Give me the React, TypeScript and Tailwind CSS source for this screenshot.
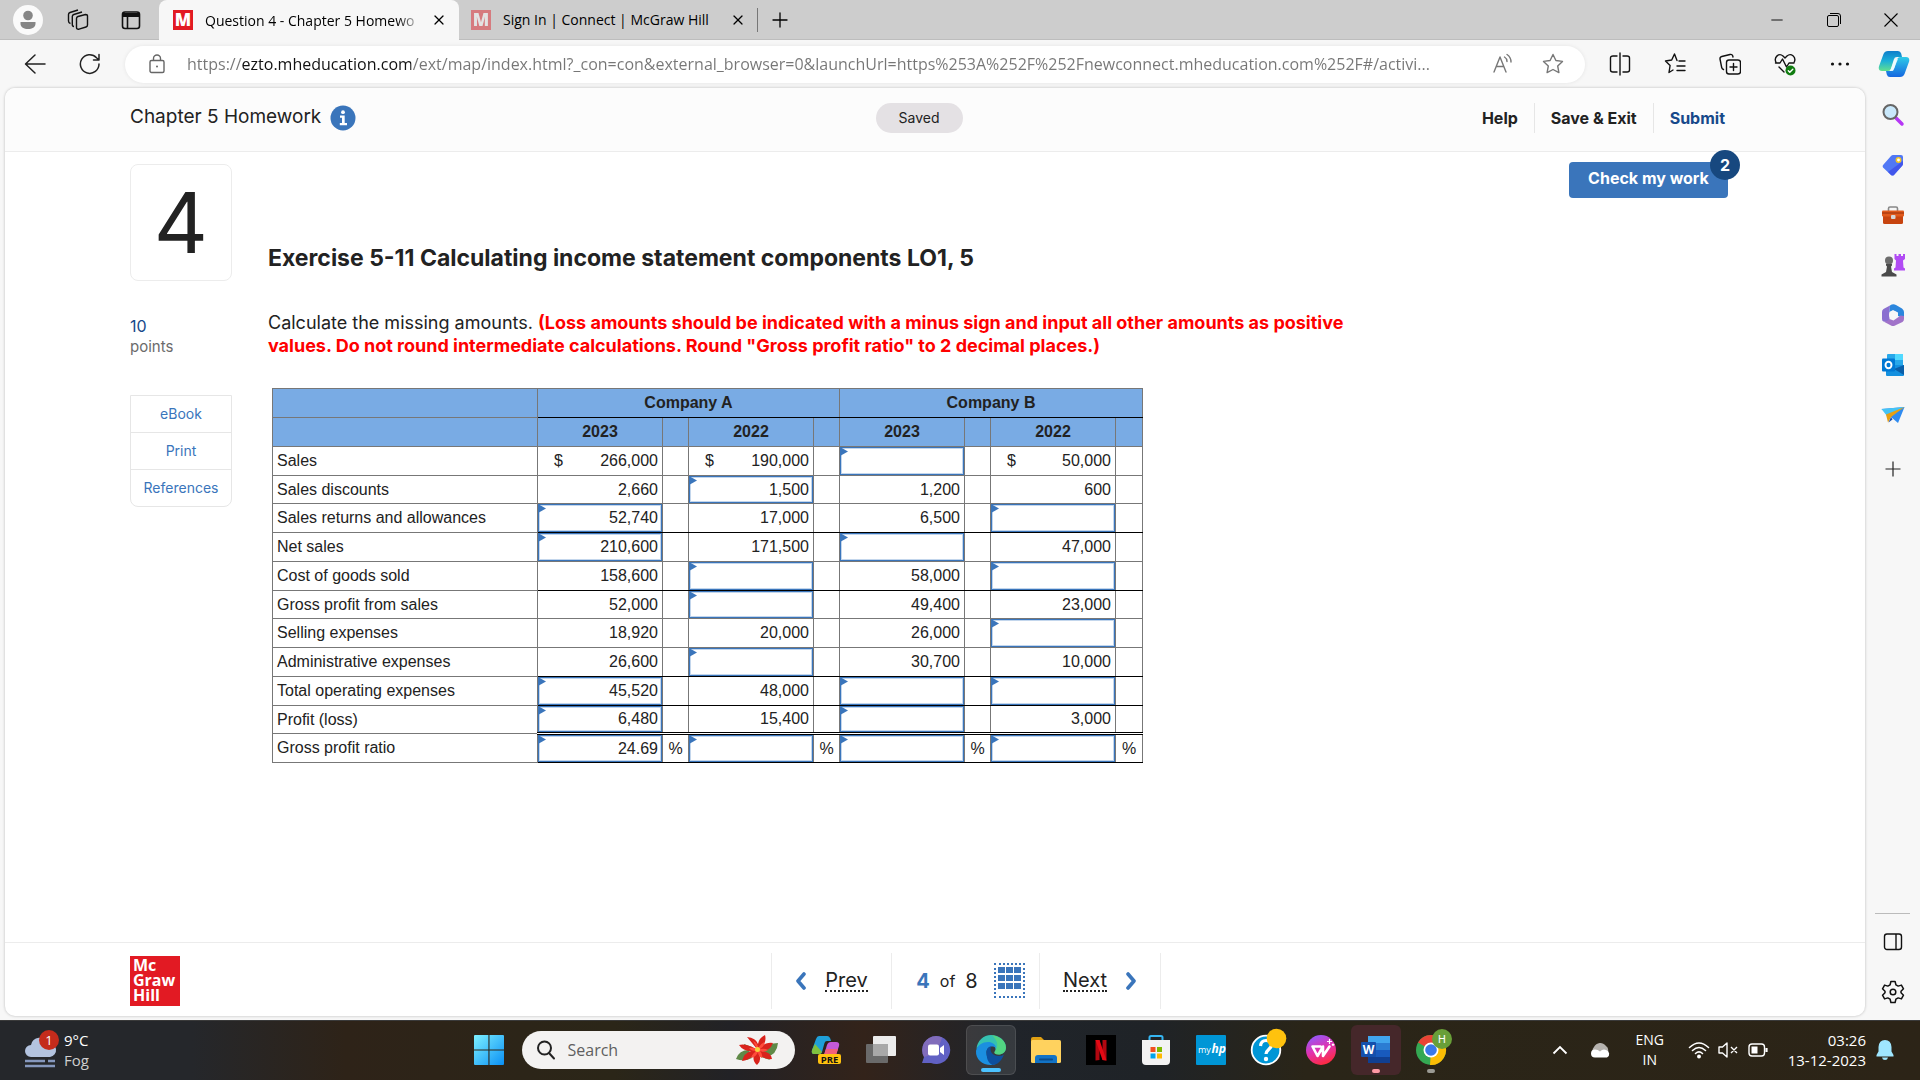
import type { ReactNode } from 'react';
import { X, Plus, Minus } from 'lucide-react';

type Cell = { value: string; input?: boolean; dollar?: boolean };
type Row = { label: string; rule?: 'single' | 'double'; cells: Cell[]; unit?: string };

const n = (value: string): Cell => ({ value });
const d = (value: string): Cell => ({ value, dollar: true });
const i = (value = ''): Cell => ({ value, input: true });

const COLUMNS = ['Company A 2023', 'Company A 2022', 'Company B 2023', 'Company B 2022'];

const ROWS: Row[] = [
    { label: 'Sales', cells: [d('266,000'), d('190,000'), i(), d('50,000')] },
    { label: 'Sales discounts', cells: [n('2,660'), i('1,500'), n('1,200'), n('600')] },
    { label: 'Sales returns and allowances', rule: 'single', cells: [i('52,740'), n('17,000'), n('6,500'), i()] },
    { label: 'Net sales', cells: [i('210,600'), n('171,500'), i(), n('47,000')] },
    { label: 'Cost of goods sold', rule: 'single', cells: [n('158,600'), i(), n('58,000'), i()] },
    { label: 'Gross profit from sales', cells: [n('52,000'), i(), n('49,400'), n('23,000')] },
    { label: 'Selling expenses', cells: [n('18,920'), n('20,000'), n('26,000'), i()] },
    { label: 'Administrative expenses', rule: 'single', cells: [n('26,600'), i(), n('30,700'), n('10,000')] },
    { label: 'Total operating expenses', rule: 'single', cells: [i('45,520'), n('48,000'), i(), i()] },
    { label: 'Profit (loss)', rule: 'double', cells: [i('6,480'), n('15,400'), i(), n('3,000')] },
    { label: 'Gross profit ratio', rule: 'single', unit: '%', cells: [i('24.69'), i(), i(), i()] },
];

const RULES = {
    none: 'border-b-[#777777]',
    single: 'border-b-black',
    double: 'border-b-[3px] border-b-black [border-bottom-style:double]',
};

/* ---------- Browser chrome ---------- */

function Favicon({ faded }: { faded?: boolean }) {
    return (
        <svg viewBox="0 0 20 20" className={faded ? 'w-5 h-5 shrink-0 opacity-45' : 'w-5 h-5 shrink-0'}>
            <rect width="20" height="20" fill="#e21a23" />
            <text x="10" y="16" textAnchor="middle" fontSize="17" fontWeight="800" fontFamily="Open Sans, sans-serif" fill="#fff">M</text>
        </svg>
    );
}

function TabBar() {
    return (
        <header className="h-10 bg-[#cdcdcd] flex items-stretch text-black font-['Open_Sans',sans-serif]">
            <div className="w-[159px] flex items-center border-b border-[#bdbdbd]">
                <button aria-label="Profile" className="ml-[13px] w-[30px] h-[30px] rounded-full bg-[#fafafa] flex items-center justify-center">
                    <svg viewBox="0 0 18 20" className="w-[18px] h-5" fill="#868686">
                        <circle cx="9" cy="5.500" r="4.800" />
                        <path d="M1.500 12h15v1.500c0 4-3.500 5.500-7.500 5.500s-7.500-1.500-7.500-5.500z" />
                    </svg>
                </button>
                <button aria-label="Workspaces" className="ml-6">
                    <svg viewBox="0 0 22 22" className="w-[22px] h-[22px]" fill="none" stroke="#111" strokeWidth="1.400" strokeLinejoin="round">
                        <path d="M9.500 9.500q0-1.500 1.500-2l7.500-2q2 0 2 1.500v9q0 1.500-1.500 2l-7 2.200q-2.500.3-2.500-1.700z" />
                        <path d="M7 17.500q-1.700 0-1.700-2v-8q0-1.500 1.500-2L15 3" />
                        <path d="M3.500 14.500q-2-.5-2-2.500V5.500q0-1.500 1.500-2L11 1" />
                    </svg>
                </button>
                <button aria-label="Tab actions" className="ml-8">
                    <svg viewBox="0 0 20 20" className="w-5 h-5" fill="none" stroke="#111" strokeWidth="1.600">
                        <rect x="1.500" y="2" width="17" height="16.500" rx="2.500" />
                        <path d="M2 5h16" strokeWidth="4" />
                        <path d="M6.500 6v12" />
                    </svg>
                </button>
            </div>
            <div className="w-[300px] bg-[#f7f7f7] rounded-t-lg flex items-center pl-[14px] pr-3">
                <Favicon />
                <button className="ml-3 w-[218px] overflow-hidden whitespace-nowrap text-left text-[14px] [mask-image:linear-gradient(to_right,black_88%,transparent)]">
                    Question 4 - Chapter 5 Homewo
                </button>
                <button aria-label="Close tab" className="ml-2">
                    <X size={16} strokeWidth={1.800} />
                </button>
            </div>
            <div className="flex-1 flex items-center border-b border-[#bdbdbd]">
                <div className="flex items-center pl-3">
                    <Favicon faded />
                    <button className="ml-3 w-[216px] whitespace-nowrap text-left text-[14px]">Sign In | Connect | McGraw Hill</button>
                    <button aria-label="Close tab" className="ml-[11px]">
                        <X size={16} strokeWidth={1.800} />
                    </button>
                </div>
                <div className="ml-[11px] h-6 w-px bg-[#777]" />
                <button aria-label="New tab" className="ml-2.5">
                    <Plus size={24} strokeWidth={1.300} />
                </button>
                <div className="ml-auto flex items-center">
                    <button aria-label="Minimize" className="w-[57px] flex justify-center">
                        <Minus size={18} strokeWidth={1.200} />
                    </button>
                    <button aria-label="Restore" className="w-[57px] flex justify-center">
                        <svg viewBox="0 0 14 14" className="w-[14px] h-[14px]" fill="none" stroke="#000" strokeWidth="1">
                            <rect x=".5" y="2.500" width="11" height="11" rx="1.500" />
                            <path d="M3 .5h8q2.500 0 2.500 2.500v8" />
                        </svg>
                    </button>
                    <button aria-label="Close window" className="w-[58px] flex justify-center">
                        <svg viewBox="0 0 14 14" className="w-[14px] h-[14px]" stroke="#000" strokeWidth="1.100">
                            <path d="M.5.5l13 13M13.500.5l-13 13" />
                        </svg>
                    </button>
                </div>
            </div>
        </header>
    );
}

function ToolButton({ label, children }: { label: string; children: ReactNode }) {
    return (
        <button aria-label={label} className="w-[55px] flex justify-center">
            <svg viewBox="0 0 22 24" className="w-[22px] h-6" fill="none" stroke="#111" strokeWidth="1.400" strokeLinecap="round" strokeLinejoin="round">
                {children}
            </svg>
        </button>
    );
}

function Toolbar() {
    return (
        <div className="h-12 bg-[#f7f7f7] flex items-center">
            <button aria-label="Back" className="ml-6">
                <svg viewBox="0 0 22 22" className="w-[22px] h-[22px]" fill="none" stroke="#222" strokeWidth="1.500" strokeLinecap="round" strokeLinejoin="round">
                    <path d="M11 2L1.500 11 11 20M2 11h19" />
                </svg>
            </button>
            <button aria-label="Refresh" className="ml-[33px]">
                <svg viewBox="0 0 22 22" className="w-[22px] h-[22px]" fill="none" stroke="#222" strokeWidth="1.500" strokeLinecap="round" strokeLinejoin="round">
                    <path d="M20 11a9.300 9.300 0 1 1-2.500-6.300L20 7M20 1.500V7h-5.500" />
                </svg>
            </button>
            <div className="ml-6 h-[37px] flex-1 min-w-0 bg-white rounded-full shadow-[0_0_4px_rgba(0,0,0,0.08)] flex items-center pl-6 pr-[21px]">
                <button aria-label="View site information">
                    <svg viewBox="0 0 16 20" className="w-4 h-5" fill="none" stroke="#666" strokeWidth="1.400">
                        <rect x="1" y="6.500" width="14" height="12" rx="1.500" />
                        <path d="M4.500 6.500V4.500a3.500 3.500 0 0 1 7 0v2" />
                        <circle cx="8" cy="12.500" r="1" fill="#666" stroke="none" />
                    </svg>
                </button>
                <input
                    aria-label="Address"
                    readOnly
                    value="https://ezto.mheducation.com/ext/map/index.html?_con=con&external_browser=0&launchUrl=https%253A%252F%252Fnewconnect.mheducation.com%252F#/activi..."
                    className="ml-[22px] min-w-0 flex-1 outline-none font-['Open_Sans',sans-serif] text-[16px] text-transparent bg-clip-text bg-[linear-gradient(to_right,#767676_54px,#111111_54px,#111111_224px,#767676_224px)]"
                />
                <button aria-label="Read aloud" className="ml-3">
                    <svg viewBox="0 0 22 22" className="w-[22px] h-[22px]" fill="none" stroke="#777" strokeWidth="1.400" strokeLinecap="round" strokeLinejoin="round">
                        <path d="M2 19L8 4l6 15M4.500 13.500h7" />
                        <path d="M12.500 4q2.500 1.500 2.500 4.500M15 1.500q4 2.500 4 7.500" />
                    </svg>
                </button>
                <button aria-label="Add to favorites" className="ml-7">
                    <svg viewBox="0 0 22 22" className="w-[22px] h-[22px]" fill="none" stroke="#777" strokeWidth="1.400" strokeLinejoin="round">
                        <path d="M11 1.500l2.900 6 6.600.9-4.800 4.600 1.200 6.600L11 16.500l-5.900 3.100 1.200-6.600L1.500 8.400l6.600-.9z" />
                    </svg>
                </button>
            </div>
            <div className="ml-[7px] flex items-center">
                <ToolButton label="Split screen">
                    <path d="M8 4H4Q1.500 4 1.500 6v12q0 2 2.500 2h4M14 4h4q2.500 0 2.500 2v12q0 2-2.500 2h-4M11 1v22" />
                </ToolButton>
                <ToolButton label="Favorites">
                    <path d="M13 8.500L10.500 2 7.700 8 1.500 9l4.600 4.500L5 20.500l4-2.500M15 9h6M13 14h8M13 18.500h8" />
                </ToolButton>
                <ToolButton label="Collections">
                    <rect x="7.500" y="8" width="14" height="14" rx="2.500" />
                    <path d="M14.500 11.500v7M11 15h7M4.500 17.500Q3 17 2.700 15.500L1 7Q.8 5 2.800 4.500L11 2.500q2-.5 2.700 1.300L14 5" />
                </ToolButton>
                <ToolButton label="Browser essentials">
                    <path d="M2 10.500C-.5 5 5 .5 9 4l2 2 2-2c4-3.500 9.500 1 7.300 6M1.500 11h4.500l2.500-4 4 8 2.500-4h5M5 15l5 5" />
                    <circle cx="16.500" cy="18.500" r="5" fill="#107c10" stroke="none" />
                    <path d="M14.300 18.700l1.500 1.500 3-3" stroke="#fff" />
                </ToolButton>
                <ToolButton label="Settings and more">
                    <g fill="#111" stroke="none">
                        <circle cx="3.500" cy="12" r="1.600" />
                        <circle cx="11" cy="12" r="1.600" />
                        <circle cx="18.500" cy="12" r="1.600" />
                    </g>
                </ToolButton>
            </div>
            <button aria-label="Copilot" className="w-[53px] flex justify-center">
                <CopilotIcon />
            </button>
        </div>
    );
}

function CopilotIcon() {
    return (
        <svg viewBox="0 0 32 28" className="w-8 h-7">
            <defs>
                <linearGradient id="cpA" x1="0" y1="0" x2="0" y2="1">
                    <stop offset="0" stopColor="#0f7ecb" />
                    <stop offset=".5" stopColor="#1cb0d8" />
                    <stop offset="1" stopColor="#62e08f" />
                </linearGradient>
                <linearGradient id="cpB" x1="0" y1="0" x2="0" y2="1">
                    <stop offset="0" stopColor="#2ecbe8" />
                    <stop offset="1" stopColor="#1567e0" />
                </linearGradient>
            </defs>
            <path d="M10 1h10q2.500 0 3.200 2.600L24 7h-5q-2.500 0-3.200 2.400L13 18.500Q12.400 21 10 21H4q-4.200 0-3-4.800L5.500 4Q6.700 1 10 1z" fill="url(#cpA)" />
            <path d="M22 27H12q-2.500 0-3.200-2.600L8 21h5q2.500 0 3.200-2.400L19 9.500Q19.600 7 22 7h6q4.200 0 3 4.800L26.500 24q-1.200 3-4.500 3z" fill="url(#cpB)" />
            <path d="M17 9h3l-5 12h-3z" fill="#eafcff" opacity=".8" />
        </svg>
    );
}

function EdgeSidebar() {
    const slot = 'w-[26px] h-[26px] flex items-center justify-center';
    return (
        <aside className="w-[55px] shrink-0 flex flex-col items-center pt-3.5 pb-4">
            <div className="flex flex-col gap-6">
                <button aria-label="Search" className={slot}>
                    <svg viewBox="0 0 24 24" className="w-6 h-6">
                        <path d="M14 14l7 7" stroke="#b637f5" strokeWidth="3.500" strokeLinecap="round" />
                        <circle cx="9.500" cy="9" r="7" fill="#c9e8fb" stroke="#666" strokeWidth="2" />
                    </svg>
                </button>
                <button aria-label="Shopping" className={slot}>
                    <svg viewBox="0 0 24 24" className="w-6 h-6">
                        <path d="M12 2h8q2 0 2 2v7q0 1-1 2l-8 9q-1.500 1.200-3 0L2 14.500q-1-1.500.3-2.700L10 3q1-1 2-1z" fill="#5178f5" />
                        <path d="M22 8v3q0 1-1 2l-8 9q-1.500 1.200-3 0l-3-3z" fill="#3b47e8" opacity=".7" />
                        <circle cx="17.500" cy="7" r="2.200" fill="#fff" stroke="#f5c623" strokeWidth="1.500" />
                    </svg>
                </button>
                <button aria-label="Tools" className={slot}>
                    <svg viewBox="0 0 24 24" className="w-6 h-6">
                        <path d="M7.500 8V5.500Q7.500 4 9 4h6q1.500 0 1.500 1.500V8" fill="none" stroke="#888" strokeWidth="1.600" />
                        <rect x="2" y="10" width="20" height="11" rx="1.500" fill="#c7440f" />
                        <rect x="1" y="7.500" width="22" height="6" rx="1" fill="#e15a1c" />
                        <path d="M1 10h22" stroke="#962e0a" strokeWidth="1" />
                        <rect x="10" y="12" width="4.500" height="4" rx="1" fill="#d5d5d5" />
                    </svg>
                </button>
                <button aria-label="Games" className={slot}>
                    <svg viewBox="0 0 24 24" className="w-6 h-6">
                        <path d="M13.500 1h2v2h2V1h2.500v2h2V1h2v5l-2 1.500.5 7 1.500 1v2H13v-2l1.500-1 .5-7L13.500 6z" fill="#b14bf4" />
                        <circle cx="8" cy="7.500" r="4" fill="#6d6d6d" />
                        <path d="M5 11h6v1.500l-1 1 1 5.500 4.500 2.500v2H.5v-2L5 19l1-5.500-1-1z" fill="#4a4a4a" />
                    </svg>
                </button>
                <button aria-label="Microsoft 365" className={slot}>
                    <svg viewBox="0 0 24 24" className="w-6 h-6">
                        <path d="M9 2.500L2.500 6Q1 7 1 9v7q0 2 1.500 2.500Q8 20 8.500 16V9L9 2.500z" fill="#8a6fd0" />
                        <path d="M9 2.500Q12 .5 15 2l6 3.500Q23 7 23 9v6l-6-2V9.500L12 7 8.500 9z" fill="#2b86dd" />
                        <path d="M23 13v3q0 2-1.500 3L14 22.500q-2 1-4 0L2.500 18.500q3 1 6-2.500l4 1.500 5-3.500 2-1.500z" fill="#a173c9" />
                        <circle cx="12" cy="12" r="4" fill="#f7f7f7" />
                    </svg>
                </button>
                <button aria-label="Outlook" className={slot}>
                    <svg viewBox="0 0 24 24" className="w-6 h-6">
                        <rect x="6" y="1" width="16" height="12" rx="1" fill="#28a8ea" />
                        <rect x="14" y="1" width="8" height="6" fill="#50d9ff" />
                        <path d="M5 12h18v10q0 1-1 1H6q-1 0-1-1z" fill="#1490df" />
                        <path d="M23 12v10l-10-6z" fill="#0a5ea8" />
                        <rect x="1" y="5.500" width="13" height="13" rx="1" fill="#0078d4" />
                        <ellipse cx="7.500" cy="12" rx="3" ry="3.300" fill="none" stroke="#fff" strokeWidth="1.900" />
                    </svg>
                </button>
                <button aria-label="Drop" className={slot}>
                    <svg viewBox="0 0 24 24" className="w-6 h-6">
                        <path d="M.5 6L23.500 4 17 20z" fill="#2f8bf0" />
                        <path d="M.5 6L23.500 4 6 13z" fill="#45c3f5" />
                        <path d="M23.500 4L5 11.500l2 8L10 14z" fill="#e8a012" />
                        <path d="M10 14l-2.500 5.500 4-3z" fill="#1a4fae" />
                    </svg>
                </button>
            </div>
            <button aria-label="Customize" className="mt-[33px]">
                <svg viewBox="0 0 16 16" className="w-4 h-4" stroke="#222" strokeWidth="1.200">
                    <path d="M8 .5v15M.5 8h15" />
                </svg>
            </button>
            <div className="mt-auto w-[35px] h-px bg-[#bbb]" />
            <button aria-label="Hide sidebar" className="mt-[18px]">
                <svg viewBox="0 0 20 20" className="w-5 h-5" fill="none" stroke="#111" strokeWidth="1.400">
                    <rect x="1.500" y="2" width="17" height="15.500" rx="2.500" />
                    <path d="M13 2v15.500" />
                </svg>
            </button>
            <button aria-label="Settings" className="mt-7">
                <svg viewBox="0 0 24 24" className="w-6 h-6" fill="none" stroke="#111" strokeWidth="1.500" strokeLinejoin="round">
                    <path d="M9.900 1.500h4.200l.8 3.300 2.300 1.300 3.200-1 2.100 3.700L20 11.200v1.600l2.500 2.400-2.100 3.700-3.200-1-2.300 1.300-.8 3.300H9.900l-.8-3.300-2.300-1.300-3.200 1-2.100-3.700L4 12.800v-1.600L1.500 8.800l2.100-3.700 3.200 1 2.300-1.300z" />
                    <circle cx="12" cy="12" r="2.800" />
                </svg>
            </button>
        </aside>
    );
}

/* ---------- Assignment page ---------- */

function PageHeader() {
    return (
        <div className="h-16 bg-[#fcfcfc] border-b border-[#ececec] flex items-center justify-between pl-[125px] pr-[140px] pb-1">
            <div className="flex items-center gap-[9px]">
                <h1 className="text-[19px]">Chapter 5 Homework</h1>
                <button aria-label="Assignment information">
                    <svg viewBox="0 0 26 26" className="w-[26px] h-[26px]">
                        <circle cx="13" cy="13" r="12.500" fill="#3a75bb" />
                        <path d="M10 10.500h4.700V18H17v2.300H9.800V18H12v-5.200h-2z" fill="#fff" />
                        <circle cx="13" cy="7.200" r="1.900" fill="#fff" />
                    </svg>
                </button>
            </div>
            <span className="w-[87px] h-[30px] rounded-full bg-[#e4e1e4] flex items-center justify-center text-[14px]">Saved</span>
            <nav className="flex items-center divide-x divide-[#e6e6e6] text-[16px] font-bold leading-[30px]">
                <a href="#help" className="pr-4">Help</a>
                <a href="#exit" className="px-4">Save &amp; Exit</a>
                <a href="#submit" className="pl-4 text-[#17498a]">Submit</a>
            </nav>
        </div>
    );
}

function AmountCell({ cell, name }: { cell: Cell; name: string }) {
    if (cell.input) {
        return (
            <div className="relative h-full">
                <input
                    aria-label={name}
                    defaultValue={cell.value}
                    className="block w-full h-full border border-[#3a75bb] shadow-[inset_0_0_0_1px_#c3d6ec] pr-[3px] text-right outline-none"
                />
                <svg viewBox="0 0 8 9" className="absolute left-0 top-0 w-2 h-[9px]" fill="#3a75bb">
                    <path d="M0 0v9l8-4.500z" />
                </svg>
            </div>
        );
    }
    return (
        <div className="flex justify-between pl-4 pr-1">
            <span>{cell.dollar ? '$' : ''}</span>
            <span>{cell.value}</span>
        </div>
    );
}

function IncomeTable() {
    const head = 'border border-[#777777] p-0 font-bold';
    return (
        <table className="mt-[31px] ml-1 w-[871px] table-fixed border-collapse bg-white text-[16px] leading-[18px] font-['Liberation_Sans',Arial,sans-serif]">
            <colgroup>
                <col className="w-[265px]" />
                {COLUMNS.map((c, index) => [
                    <col key={c} className="w-[125px]" />,
                    <col key={c + ' unit'} className={index < COLUMNS.length - 1 ? 'w-[26px]' : ''} />,
                ])}
            </colgroup>
            <thead className="bg-[#79abe4]">
                <tr className="h-[29px]">
                    <th className={head} />
                    <th colSpan={4} className={head + ' border-b-black'}>Company A</th>
                    <th colSpan={4} className={head + ' border-b-black'}>Company B</th>
                </tr>
                <tr className="h-[29px]">
                    <th className={head} />
                    {COLUMNS.map((c) => [
                        <th key={c} className={head}>{c.slice(-4)}</th>,
                        <th key={c + ' unit'} className={head} />,
                    ])}
                </tr>
            </thead>
            <tbody>
                {ROWS.map((row, r) => {
                    const rule = RULES[row.rule ?? 'none'];
                    const height = r % 4 === 1 ? 'h-[28px]' : 'h-[29px]';
                    return (
                        <tr key={row.label} className={height}>
                            <th scope="row" className="border border-[#777777] p-0 pl-1 text-left font-normal">{row.label}</th>
                            {row.cells.map((cell, c) => [
                                <td key={c} className={`${height} border border-[#777777] p-0 ${rule}`}>
                                    <AmountCell cell={cell} name={`${row.label}, ${COLUMNS[c]}`} />
                                </td>,
                                <td key={c + 'u'} className={`border border-[#777777] p-0 text-center ${rule}`}>{row.unit}</td>,
                            ])}
                        </tr>
                    );
                })}
            </tbody>
        </table>
    );
}

function Assignment() {
    return (
        <main className="flex-1 min-h-0 flex items-start pl-[125px] pr-[137px]">
            <aside className="w-[102px] shrink-0 pt-3">
                <div className="h-[117px] rounded-lg border border-[#ececec] flex items-center justify-center text-[84px] leading-none">4</div>
                <p className="mt-[34px] text-[16px] leading-[22px] text-[#17498a]">10</p>
                <p className="text-[15px] leading-5 text-[#6b6b6b]">points</p>
                <nav className="mt-[38px] rounded-b-lg border border-[#e6e6e6] divide-y divide-[#e6e6e6] text-center text-[14px] leading-9 text-[#3a75bb]">
                    <a href="#ebook" className="block">eBook</a>
                    <a href="#print" className="block">Print</a>
                    <a href="#references" className="block">References</a>
                </nav>
            </aside>

            <section className="ml-9 flex-1 min-w-0 pt-[90px]">
                <h2 className="text-[23px] leading-8 font-bold">Exercise 5-11 Calculating income statement components LO1, 5</h2>
                <p className="mt-[37px] max-w-[1140px] text-[18px] leading-[23px]">
                    Calculate the missing amounts.{' '}
                    <strong className="font-bold text-[#ff0000]">
                        (Loss amounts should be indicated with a minus sign and input all other amounts as positive
                        values. Do not round intermediate calculations. Round "Gross profit ratio" to 2 decimal places.)
                    </strong>
                </p>
                <IncomeTable />
            </section>

            <button className="relative mt-2.5 shrink-0 w-[159px] h-9 rounded-sm bg-[#3a75bb] pb-1 text-white text-[16px] font-bold">
                Check my work
                <span className="absolute -top-3 -right-3 w-[30px] h-[30px] rounded-full bg-[#17487f] flex items-center justify-center">2</span>
            </button>
        </main>
    );
}

function Chevron({ next }: { next?: boolean }) {
    return (
        <svg viewBox="0 0 12 18" className="w-3 h-[18px]" fill="none" stroke="#3a75bb" strokeWidth="3.600" strokeLinejoin="round" strokeLinecap="round">
            <path d={next ? 'M3 2l6 7-6 7' : 'M9 2L3 9l6 7'} />
        </svg>
    );
}

function PageFooter() {
    return (
        <footer className="h-[74px] border-t border-[#ececec] grid grid-cols-[1fr_auto_1fr] items-center pt-0.5 pl-[125px] pr-[63px]">
            <div className="w-[50px] h-[50px] bg-[#e21a23] pl-[3px] text-[16px] leading-[15px] font-bold text-white flex flex-col justify-center font-['Open_Sans',sans-serif]">
                <span>Mc</span>
                <span>Graw</span>
                <span>Hill</span>
            </div>
            <nav className="flex h-14 border-x border-[#ececec] divide-x divide-[#ececec] text-[20px]">
                <button className="w-[120px] flex items-center justify-center gap-[18px]">
                    <Chevron />
                    <span className="border-b-2 border-dotted border-[#222] leading-[20px]">Prev</span>
                </button>
                <div className="w-[148px] flex items-center justify-center gap-2.5 pl-2.5">
                    <span className="font-bold text-[#3a75bb]">4</span>
                    <span className="text-[16px]">of</span>
                    <span>8</span>
                    <button aria-label="Question list" className="ml-1.5 w-[31px] h-[35px] border-2 border-dotted border-[#3a75bb] flex justify-center pt-0.5">
                        <svg viewBox="0 0 23 23" className="w-[23px] h-[23px]" fill="#3a75bb">
                            <path d="M0 0h7v6H0zM8 0h7v6H8zM16 0h7v6h-7zM0 8h7v6H0zM8 8h7v6H8zM16 8h7v6h-7zM0 16h7v6H0zM8 16h7v6H8zM16 16h7v6h-7z" />
                        </svg>
                    </button>
                </div>
                <button className="w-[120px] flex items-center justify-center gap-[18px]">
                    <span className="border-b-2 border-dotted border-[#222] leading-[20px]">Next</span>
                    <Chevron next />
                </button>
            </nav>
        </footer>
    );
}

/* ---------- Windows taskbar ---------- */

function TaskApp({ label, tile, mark, children }: { label: string; tile?: string; mark?: string; children: ReactNode }) {
    return (
        <button aria-label={label} className="w-[55px] h-[58px] flex justify-center items-center">
            <span className={`relative w-[50px] h-[50px] rounded-md flex justify-center items-center ${tile ?? ''}`}>
                <svg viewBox="0 0 32 32" className="w-8 h-8 overflow-visible">{children}</svg>
                {mark && <span className={`absolute bottom-0.5 h-1 rounded-full ${mark}`} />}
            </span>
        </button>
    );
}

function PinnedApps() {
    return (
        <div className="flex">
            <TaskApp label="Copilot preview">
                <path d="M9 2h8q3 0 4 5h-4q-2 0-2.500 2L12 18q-.5 2-3 2H4q-3 0-2-4L6 5q1-3 3-3z" fill="#1f9fd8" />
                <path d="M5 10l7 8q-.5 2-3 2H4q-3 0-2-4z" fill="#7fc13f" />
                <path d="M21 8h5q4 0 3 4l-3 9H14l3-10q1-3 4-3z" fill="#c45ad8" />
                <path d="M16 15h12l-2 6H14z" fill="#f0607a" />
                <rect x="8" y="20" width="23" height="10" rx="2" fill="#ffc20e" />
                <text x="19.500" y="28.500" textAnchor="middle" fontSize="9.500" fontWeight="700" fontFamily="Open Sans, sans-serif" fill="#111">PRE</text>
            </TaskApp>
            <TaskApp label="Task view">
                <rect x="8" y="2" width="23" height="20" rx="1" fill="#ececec" />
                <rect x="1" y="10" width="22" height="19" rx="1" fill="#6a6a6a" />
                <path d="M8 10h15v12H8z" fill="#a8a8a8" />
            </TaskApp>
            <TaskApp label="Chat">
                <path d="M16 2a14 14 0 1 1-5 27H2l2-6A14 14 0 0 1 16 2z" fill="#6161c4" />
                <path d="M16 2A14 14 0 0 0 4 23Q18 20 22 3.500 19 2 16 2z" fill="#8f70b8" opacity=".7" />
                <rect x="8" y="10.500" width="11" height="11" rx="2" fill="#fff" />
                <path d="M20 14l4-3v10l-4-3z" fill="#fff" />
            </TaskApp>
            <TaskApp label="Microsoft Edge" tile="bg-white/10 border border-white/10" mark="w-5 bg-[#4cc2ff]">
                <path d="M1.500 15C2 7 8.500 1 16 1c8.500 0 15 6 15 12.500 0 4.500-3.500 7-7.500 7-3 0-4.500-1.200-4-2.500 3-4-1-7.500-5-7.500C8 10.500 3 12 1.500 15z" fill="#35c1b1" />
                <path d="M22 2.500q9 4 9 11c0 4.500-3.500 7-7.500 7-3 0-4.500-1.200-4-2.500Q26 10 17 1z" fill="#5fdc6e" opacity=".7" />
                <path d="M1 17C2 11 8 8 13 8c4 0 8 2.500 8 6-3-3-9.500-1.500-9.500 4.500 0 7 5 12 9 12Q18 31 16 31C7 31 .5 25 1 17z" fill="#1b8fe0" />
                <path d="M11.500 18c0-3 2-5.500 4.500-5.500-1.500 4 .5 9.500 8 9.500q3 0 5-1.500C26.500 27 22 31 17.500 31c-5-2-6-8-6-13z" fill="#0d4f9e" />
            </TaskApp>
            <TaskApp label="File Explorer">
                <path d="M1 5q0-2 2-2h8l3 3v6H1z" fill="#e0a013" />
                <rect x="1" y="6" width="30" height="23" rx="1.500" fill="#ffd25e" />
                <path d="M5 29v-5q0-3 3-3h16q3 0 3 3v5z" fill="#1273c6" />
                <path d="M10 25.500h12" stroke="#0a4d8c" strokeWidth="2" strokeLinecap="round" />
            </TaskApp>
            <TaskApp label="Netflix">
                <rect x="1" y="1" width="30" height="30" fill="#000" />
                <path d="M10.500 6h4v20l-4 .5zM17.500 6h4v20.500l-4-.5z" fill="#b20710" />
                <path d="M10.500 6h4l7 20.500-4-.5z" fill="#e50914" />
            </TaskApp>
            <TaskApp label="Microsoft Store">
                <path d="M9.500 7V3.500Q9.500 2 11 2h10q1.500 0 1.500 1.500V7" fill="none" stroke="#35b6f2" strokeWidth="2" />
                <path d="M2 6h28v21q0 4-4 4H6q-4 0-4-4z" fill="#f3f3f3" />
                <path d="M10.500 13h5v5h-5z" fill="#f25022" />
                <path d="M17 13h5v5h-5z" fill="#7fba00" />
                <path d="M10.500 19.500h5v5h-5z" fill="#00a4ef" />
                <path d="M17 19.500h5v5h-5z" fill="#ffb900" />
            </TaskApp>
            <TaskApp label="myHP">
                <rect x="1" y="1" width="30" height="30" rx="1" fill="#0096d6" />
                <text x="3" y="19" fontSize="9" fontFamily="Open Sans, sans-serif" fill="#fff">my</text>
                <text x="16.500" y="19" fontSize="12" fontStyle="italic" fontWeight="700" fontFamily="Open Sans, sans-serif" fill="#fff">hp</text>
            </TaskApp>
            <TaskApp label="HP Support">
                <circle cx="16" cy="16" r="14.300" fill="#0096d6" stroke="#fff" strokeWidth="1.800" />
                <path d="M10.500 12q.5-5.500 5.500-5.500t5.500 4.500c0 4-5.500 4.500-5.500 9" fill="none" stroke="#fff" strokeWidth="3.200" />
                <circle cx="16" cy="25" r="2.200" fill="#fff" />
                <circle cx="26.500" cy="4.500" r="9.800" fill="#ffc20e" />
            </TaskApp>
            <TaskApp label="WPS Office">
                <defs>
                    <linearGradient id="wps" x1=".2" y1="0" x2=".6" y2="1">
                        <stop offset="0" stopColor="#8e5cff" />
                        <stop offset=".5" stopColor="#e032b0" />
                        <stop offset="1" stopColor="#ff2a3d" />
                    </linearGradient>
                </defs>
                <circle cx="16" cy="16" r="15" fill="url(#wps)" />
                <path d="M15.500 12.500H7.500L12.500 22 18 12.500V22L24.500 12.500" fill="none" stroke="#fff" strokeWidth="2.600" strokeLinejoin="round" strokeLinecap="round" />
                <path d="M24.500 5v5M22 7.500h5M28 9.500v2.500M26.800 10.700h2.500" stroke="#fff" strokeWidth="1.200" />
            </TaskApp>
            <TaskApp label="Word" tile="bg-[#45272a]" mark="w-2 bg-[#ff99a4]">
                <path d="M8 2h22v7H8z" fill="#41a5ee" />
                <path d="M8 9h22v7H8z" fill="#2b7cd3" />
                <path d="M8 16h22v7H8z" fill="#185abd" />
                <path d="M8 23h22v6H8z" fill="#103f91" />
                <rect x="1" y="8" width="15" height="15" rx="1" fill="#1450ad" />
                <text x="8.500" y="20" textAnchor="middle" fontSize="12" fontWeight="700" fontFamily="Open Sans, sans-serif" fill="#fff">W</text>
            </TaskApp>
            <TaskApp label="Google Chrome" mark="w-2 bg-[#9a9a94]">
                <circle cx="16" cy="16" r="15" fill="#34a853" />
                <path d="M16 16L3 8.500A15 15 0 0 1 29 8.500z" fill="#ea4335" />
                <path d="M16 16l13-7.500A15 15 0 0 1 15 31z" fill="#fbbc05" />
                <circle cx="16" cy="16" r="7.500" fill="#fff" />
                <circle cx="16" cy="16" r="5.800" fill="#3a78e8" />
                <circle cx="27" cy="5" r="10" fill="#689f38" />
                <text x="27" y="9" textAnchor="middle" fontSize="11" fontFamily="Roboto, sans-serif" fill="#fff">H</text>
            </TaskApp>
        </div>
    );
}

function Taskbar() {
    return (
        <div className="h-[60px] border-t border-[#3a3a3a] grid grid-cols-[1fr_auto_1fr] items-center pb-0.5 text-white text-[15px] leading-5 font-['Open_Sans',sans-serif] bg-[linear-gradient(to_right,#25272b_0%,#25272b_10%,#2e2318_18%,#2b2618_32%,#222226_38%,#33231a_45%,#20242a_52%,#1f2327_60%,#2a2518_68%,#2c2417_100%)]">
            <div className="flex items-center">
                <svg viewBox="0 0 36 40" className="ml-6 w-9 h-10">
                    <path d="M7 27a6 6 0 0 1 0-12 9 9 0 0 1 17-2 7 7 0 0 1 2 14z" fill="#b3c3df" />
                    <path d="M1 31h20M24 31h7M1 36h30" stroke="#8597bd" strokeWidth="2.600" />
                    <circle cx="25" cy="10" r="10" fill="#c42b1c" />
                    <text x="25" y="15" textAnchor="middle" fontSize="13" fill="#fff">1</text>
                </svg>
                <div className="ml-1">
                    <p>9°C</p>
                    <p className="text-[#cfcfcf]">Fog</p>
                </div>
            </div>

            <div className="flex items-center">
                <button aria-label="Start" className="w-[55px] flex justify-center">
                    <svg viewBox="0 0 30 30" className="w-[30px] h-[30px]">
                        <defs>
                            <linearGradient id="win" x1="0" y1="0" x2="1" y2="1">
                                <stop offset="0" stopColor="#7df0ff" />
                                <stop offset="1" stopColor="#0a90f5" />
                            </linearGradient>
                        </defs>
                        <path d="M0 1Q0 0 1 0h13.400v14.400H0zM15.500 0H29q1 0 1 1v13.400H15.500zM0 15.500h14.400V30H1q-1 0-1-1zM15.500 15.500H30V29q0 1-1 1H15.500z" fill="url(#win)" />
                    </svg>
                </button>
                <label className="ml-[5px] mr-1 w-[273px] h-[38px] rounded-full bg-[#f3f2f1] flex items-center pl-3.5 pr-4">
                    <svg viewBox="0 0 20 20" className="w-5 h-5 shrink-0" fill="none" stroke="#222" strokeWidth="2" strokeLinecap="round">
                        <circle cx="8.500" cy="8" r="6.500" />
                        <path d="M13 13l5 5.500" />
                    </svg>
                    <input type="text" aria-label="Search" placeholder="Search" className="ml-3 min-w-0 flex-1 text-[16px] text-black placeholder:text-[#5f5f5f] outline-none" />
                    <svg viewBox="0 0 44 32" className="w-11 h-8 shrink-0">
                        <path d="M1 25q3-9 13-9l3 8q-8 4-16 1zM43 9q-1 12-12 14l-4-7q6-7 16-7zM30 20l5 6-9-3zM9 10l8 3-3 4q-5-2-5-7z" fill="#5f8a48" />
                        <path d="M22 15L12 3q9 1 11 7Q24 4 30 1q2 7-4 12 5-5 12-4-3 8-11 8 9 1 10 8-8 1-13-5 3 7-2 11-5-4-3-11-4 6-12 7 2-8 9-10-8 0-12-6 7-2 17 4z" fill="#d9231c" />
                        <path d="M22 15l-4-8q5 2 5 7 3-5 7-6-1 5-5 7 5-1 8 1-4 3-8 1 3 3 2 7-4-2-4-6-2 5-7 6 1-4 5-7-5 0-7-3 4-1 8 1z" fill="#ff4b3a" />
                        <circle cx="22.500" cy="15.500" r="2.500" fill="#f5d13a" />
                    </svg>
                </label>
                <PinnedApps />
            </div>

            <div className="flex items-center justify-end pr-[26px]">
                <svg viewBox="0 0 16 10" className="w-4 h-2.5" fill="none" stroke="#fff" strokeWidth="1.800">
                    <path d="M1.500 8.500L8 2l6.500 6.500" />
                </svg>
                <svg viewBox="0 0 22 16" className="ml-[22px] w-[22px] h-4">
                    <path d="M5 13A5 5 0 0 1 4 5a7 7 0 0 1 12-1q3 2 2 6z" fill="#b5b2ae" />
                    <path d="M5 15.500a4 4 0 0 1 0-8q3 0 5 2 3-3 6-1.500a4 4 0 0 1 1 7.500z" fill="#fff" />
                </svg>
                <p className="ml-[22px] w-8 text-center text-[14px]">ENG IN</p>
                <svg viewBox="0 0 22 18" className="ml-[22px] w-[22px] h-[18px]" fill="none" stroke="#fff" strokeWidth="1.500" strokeLinecap="round">
                    <path d="M1.500 6.500q9.500-9 19 0M4.500 9.500q6.500-6 13 0M7.500 12.500q3.500-3.200 7 0" />
                    <circle cx="11" cy="15.500" r="1.200" fill="#fff" />
                </svg>
                <svg viewBox="0 0 20 18" className="ml-2 w-5 h-[18px]" fill="none" stroke="#fff" strokeWidth="1.400" strokeLinejoin="round">
                    <path d="M1 6h3.500L9 2v14l-4.500-4H1zM13 6l6 6M19 6l-6 6" />
                </svg>
                <svg viewBox="0 0 20 14" className="ml-2.5 w-5 h-3.5" fill="none" stroke="#fff" strokeWidth="1.400">
                    <rect x="1" y="1" width="15.500" height="12" rx="3" />
                    <path d="M18.500 5v4" strokeWidth="2.200" />
                    <rect x="3.500" y="3.500" width="6" height="7" fill="#fff" stroke="none" />
                </svg>
                <p className="ml-5 text-right">
                    03:26
                    <br />
                    13-12-2023
                </p>
                <svg viewBox="0 0 18 20" className="ml-2.5 w-[18px] h-5" fill="#9fe6ff">
                    <path d="M9 0q6 0 6.500 7v4.500L17.500 15v1.500H.5V15l2-3.500V7Q3 0 9 0zM6 17.500h6Q11.500 20 9 20t-3-2.500z" />
                </svg>
            </div>
        </div>
    );
}

export default function App() {
    return (
        <div className="h-screen flex flex-col bg-[#f7f7f7] text-[#222222]">
            <TabBar />
            <Toolbar />
            <div className="flex-1 min-h-0 flex pl-[5px]">
                <div className="flex-1 min-w-0 mb-1 rounded-[10px] overflow-hidden bg-white shadow-[0_0_3px_rgba(0,0,0,0.25)] flex flex-col font-[Inter,sans-serif]">
                    <PageHeader />
                    <Assignment />
                    <PageFooter />
                </div>
                <EdgeSidebar />
            </div>
            <Taskbar />
        </div>
    );
}
